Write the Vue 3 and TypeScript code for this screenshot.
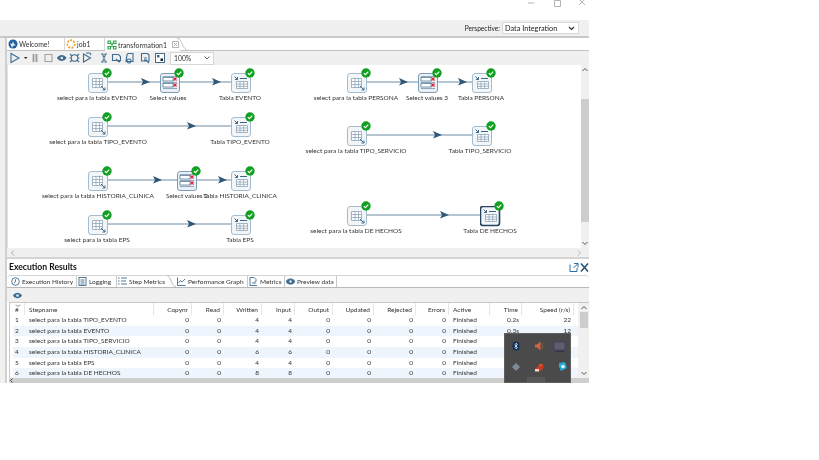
<script setup lang="ts">
interface StepNode { kind: 'in' | 'sel' | 'out' | 'outSel'; x: number; y: number; label: string; cx: number }
interface Hop { x1: number; x2: number; y: number; head: number }

const nodes: StepNode[] = [
  { kind: 'in', x: 88, y: 73, label: 'select para la tabla EVENTO', cx: 97 },
  { kind: 'sel', x: 160, y: 73, label: 'Select values', cx: 168 },
  { kind: 'out', x: 231, y: 73, label: 'Tabla EVENTO', cx: 240 },
  { kind: 'in', x: 88, y: 117, label: 'select para la tabla TIPO_EVENTO', cx: 98 },
  { kind: 'out', x: 231, y: 117, label: 'Tabla TIPO_EVENTO', cx: 240 },
  { kind: 'in', x: 88, y: 171, label: 'select para la tabla HISTORIA_CLINICA', cx: 98 },
  { kind: 'sel', x: 177, y: 171, label: 'Select values 2', cx: 187 },
  { kind: 'out', x: 231, y: 171, label: 'Tabla HISTORIA_CLINICA', cx: 240 },
  { kind: 'in', x: 88, y: 215, label: 'select para la tabla EPS', cx: 97 },
  { kind: 'out', x: 231, y: 215, label: 'Tabla EPS', cx: 240 },
  { kind: 'in', x: 347, y: 73, label: 'select para la tabla PERSONA', cx: 356 },
  { kind: 'sel', x: 418, y: 73, label: 'Select values 3', cx: 427 },
  { kind: 'out', x: 472, y: 73, label: 'Tabla PERSONA', cx: 481 },
  { kind: 'in', x: 347, y: 126, label: 'select para la tabla TIPO_SERVICIO', cx: 356 },
  { kind: 'out', x: 472, y: 126, label: 'Tabla TIPO_SERVICIO', cx: 480 },
  { kind: 'in', x: 347, y: 206, label: 'select para la tabla DE HECHOS', cx: 356 },
  { kind: 'outSel', x: 480, y: 206, label: 'Tabla DE HECHOS', cx: 490 },
]

const hops: Hop[] = [
  { x1: 108, x2: 160, y: 82, head: 141 },
  { x1: 180, x2: 231, y: 82, head: 212 },
  { x1: 108, x2: 231, y: 126, head: 187 },
  { x1: 108, x2: 177, y: 180, head: 153 },
  { x1: 197, x2: 231, y: 180, head: 218 },
  { x1: 108, x2: 231, y: 224, head: 187 },
  { x1: 367, x2: 418, y: 82, head: 399 },
  { x1: 438, x2: 472, y: 82, head: 458 },
  { x1: 367, x2: 472, y: 135, head: 433 },
  { x1: 367, x2: 480, y: 215, head: 440 },
]

const columns = ['#', 'Stepname', 'Copynr', 'Read', 'Written', 'Input', 'Output', 'Updated', 'Rejected', 'Errors', 'Active', 'Time', 'Speed (r/s)']
const rows: string[][] = [
  ['1', 'select para la tabla TIPO_EVENTO', '0', '0', '4', '4', '0', '0', '0', '0', 'Finished', '0.2s', '22'],
  ['2', 'select para la tabla EVENTO', '0', '0', '4', '4', '0', '0', '0', '0', 'Finished', '0.3s', '12'],
  ['3', 'select para la tabla TIPO_SERVICIO', '0', '0', '4', '4', '0', '0', '0', '0', 'Finished', '', ''],
  ['4', 'select para la tabla HISTORIA_CLINICA', '0', '0', '6', '6', '0', '0', '0', '0', 'Finished', '', ''],
  ['5', 'select para la tabla EPS', '0', '0', '4', '4', '0', '0', '0', '0', 'Finished', '', ''],
  ['6', 'select para la tabla DE HECHOS', '0', '0', '8', '8', '0', '0', '0', '0', 'Finished', '', ''],
]
const bottomTabs = [
  { id: 'history', label: 'Execution History', on: false, w: 67 },
  { id: 'log', label: 'Logging', on: false, w: 40 },
  { id: 'metrics', label: 'Step Metrics', on: true, w: 59 },
  { id: 'perf', label: 'Performance Graph', on: false, w: 72 },
  { id: 'met', label: 'Metrics', on: false, w: 37 },
  { id: 'prev', label: 'Preview data', on: false, w: 52 },
]
</script>

<template>
  <div class="window">
    <div class="titlebar">
      <span class="winctl">
        <svg width="58" height="8" viewBox="0 0 58 8"><path d="M0 4h6M26.500 1.500h6v6h-6zM51 0l6 6M57 0l-6 6" fill="none" stroke="#b4b4b4" stroke-width="1" /></svg>
      </span>
    </div>
    <div class="perspective">
      <span class="plabel">Perspective:</span>
      <div class="pcombo"><span>Data Integration</span><svg width="7" height="5" viewBox="0 0 7 5"><path d="M1 1l2.500 2.500L6 1" fill="none" stroke="#333" stroke-width="1.200" /></svg></div>
    </div>

    <div class="main">
      <div class="rail"></div>
      <div class="workspace">
        <div class="editor">
          <div class="tabs">
            <div class="tab">
              <svg width="10" height="10" viewBox="0 0 10 10"><circle cx="5" cy="5" r="4.500" fill="#1f5f9e" /><path d="M2 4l2 1 1-3 1 3 2 1-3 1-1 2z" fill="#dfe9f3" /></svg>
              <span>Welcome!</span>
            </div>
            <div class="tab job">
              <svg width="10" height="10" viewBox="0 0 10 10"><circle cx="5" cy="5" r="3.800" fill="none" stroke="#f0a030" stroke-width="1.800" stroke-dasharray="2 1.300" /></svg>
              <span>job1</span>
            </div>
            <div class="tab active">
              <svg width="10" height="10" viewBox="0 0 10 10"><path d="M1 1h2.500v2.500H1zM6.500 1H9v2.500H6.500zM1 6.500h2.500V9H1zM6.500 6.500H9V9H6.500zM3.500 2.500L6.500 7.500M6.500 2.500L3.500 7.500" fill="none" stroke="#2aa84a" stroke-width="1.100" /></svg>
              <span>transformation1</span>
              <svg class="tabx" width="7" height="7" viewBox="0 0 7 7"><path d="M.5.500h6v6h-6zM2 2l3 3M5 2L2 5" fill="none" stroke="#a0a0a0" stroke-width=".8" /></svg>
              <svg class="tabcurve" width="12" height="13" viewBox="0 0 12 13"><path d="M0 .5h1c4 0 4 12 11 12" fill="#fff" stroke="#c2c2c2" /></svg>
            </div>
          </div>

          <div class="toolbar">
            <svg width="156" height="12" viewBox="0 0 156 12" class="tools">
              <g fill="none" stroke="#3f6d91" stroke-width="1.100">
                <path d="M1 1.500v9l8-4.500z" />
                <path d="M14 5h3.500l-1.750 2z" fill="#222" stroke="none" />
                <path d="M23.500 2v8M26.500 2v8" stroke="#9b9b9b" stroke-width="1.800" />
                <rect x="35" y="2.500" width="7" height="7" stroke="#a5a5a5" />
                <path d="M47.500 6c2-3.200 6.500-3.200 8.500 0-2 3.200-6.500 3.200-8.500 0z" fill="#3f6d91" />
                <circle cx="51.800" cy="6" r="1.300" fill="#dfeaf2" stroke="none" />
                <circle cx="64.500" cy="6" r="3.300" />
                <path d="M60 2l2 2M69 2l-2 2M60 10l2-2M69 10l-2-2M59.500 6h1.500M69.500 6H68" />
                <path d="M73.500 2v8l7-4z M76 1h4l1 2" />
                <path d="M91 2h2v2M97 2h-2v2M91 10h2V8M97 10h-2V8M93 4l2 4M95 4l-2 4" />
                <path d="M102.500 2.500h6l2 2v4h-8zM106 7l3 3 2-2" />
                <path d="M117 3l1-1.500h5v8h-7zM119 7a2 2 0 1 0 .1 0" />
                <path d="M131.500 1.500h6l1.500 1.500v6h-7.500zM134 6h3M134 8h3M137 9l2 2" />
              </g>
              <rect x="145.500" y="1.500" width="9" height="9" fill="#fff" stroke="#3f6d91" />
              <rect x="147" y="3" width="2.500" height="2.500" fill="#3f6d91" />
              <rect x="150.500" y="6.500" width="2.500" height="2.500" fill="#222" />
            </svg>
            <div class="zoombox"><span>100%</span><svg width="6" height="4" viewBox="0 0 6 4"><path d="M.5.500L3 3 5.500.500" fill="none" stroke="#666" /></svg></div>
          </div>

          <div class="canvasrow">
            <div class="canvas">
              <svg class="hops" width="581" height="192">
                <g v-for="(h, i) in hops" :key="i">
                  <line :x1="h.x1 - 8" :x2="h.x2 - 8" :y1="h.y - 65" :y2="h.y - 65" stroke="#6d8ba3" stroke-width="1" />
                  <path :d="`M${h.head - 8} ${h.y - 69}l9 4-9 3.500 2-3.500z`" fill="#2f5878" />
                </g>
              </svg>
              <div v-for="n in nodes" :key="n.label" class="node" :style="{ left: n.x - 8 + 'px', top: n.y - 65 + 'px' }">
                <svg width="22" height="22" viewBox="0 0 22 22" class="stepicon">
                  <rect x=".5" y=".5" width="19" height="19" rx="2.500" :fill="n.kind === 'sel' ? '#e9eff4' : '#f3f6f9'" :stroke="n.kind === 'outSel' ? '#26445e' : n.kind === 'sel' ? '#7e9cb4' : '#a4bccf'" :stroke-width="n.kind === 'outSel' ? 1.600 : 1" />
                  <template v-if="n.kind === 'in'">
                    <path d="M4.500 5.500h10v9h-10zM4.500 8.500h10M4.500 11.500h10M8 5.500v9M11.500 5.500v9" fill="#fff" stroke="#8ea5b8" stroke-width=".8" />
                    <path d="M13 13l4 4M17 14.500V17h-2.500" fill="none" stroke="#3f6886" stroke-width="1" />
                  </template>
                  <template v-else-if="n.kind === 'sel'">
                    <path d="M3 3.500h14M3 9.500h14M3 15.500h14" stroke="#8fa8bc" stroke-width="1" />
                    <rect x="3" y="4.500" width="10" height="3.500" fill="#fff" stroke="#5a7f9a" stroke-width=".8" />
                    <rect x="3" y="10.500" width="10" height="3.500" fill="#fff" stroke="#5a7f9a" stroke-width=".8" />
                    <path d="M13.500 4.500l3 3M16.500 4.500l-3 3M13.500 10.500l3 3M16.500 10.500l-3 3" stroke="#d8243a" stroke-width="1.100" />
                  </template>
                  <template v-else>
                    <path d="M5.500 8.500h11v7h-11zM5.500 11h11M5.500 13.300h11M9 8.500v7M12.700 8.500v7" fill="#fff" stroke="#8ea5b8" stroke-width=".8" />
                    <path d="M3.500 3.500l3 3M6.500 4v2.500H4M9 5.500h7" fill="none" stroke="#3f6886" stroke-width="1" />
                  </template>
                </svg>
                <svg width="10" height="10" viewBox="0 0 10 10" class="check"><circle cx="5" cy="5" r="4.700" fill="#10a020" /><path d="M2.800 5.100l1.600 1.600 2.900-3" fill="none" stroke="#fff" stroke-width="1.200" /></svg>
              </div>
              <div v-for="n in nodes" :key="'l' + n.label" class="label" :style="{ left: n.cx - 8 + 'px', top: n.y + 20 - 65 + 'px' }">{{ n.label }}</div>
            </div>
            <div class="vscroll">
              <svg width="8" height="6" viewBox="0 0 8 6"><path d="M1.500 4L4 1.500 6.500 4" fill="none" stroke="#555" /></svg>
              <div class="vtrack"><div class="vthumb"></div></div>
              <svg width="8" height="6" viewBox="0 0 8 6"><path d="M1.500 2L4 4.500 6.500 2" fill="none" stroke="#555" /></svg>
            </div>
          </div>
          <div class="hscroll">
            <svg width="6" height="8" viewBox="0 0 6 8"><path d="M4 1.500L1.500 4 4 6.500" fill="none" stroke="#aaa" /></svg>
            <svg width="6" height="8" viewBox="0 0 6 8"><path d="M2 1.500L4.500 4 2 6.500" fill="none" stroke="#bbb" /></svg>
          </div>
        </div>

        <div class="results">
          <div class="rhead">
            <span class="rtitle">Execution Results</span>
            <svg width="20" height="9" viewBox="0 0 20 9" class="ricons">
              <path d="M1 1.500v7h7V5M5 .5h4v4M9 .5L4.500 5" fill="none" stroke="#2f6f9f" stroke-width="1" />
              <path d="M12 .5l7 8M19 .5l-7 8" stroke="#24507a" stroke-width="1.500" />
            </svg>
          </div>
          <div class="rtabs">
            <div v-for="t in bottomTabs" :key="t.id" class="rtab" :class="{ on: t.on }" :style="{ width: t.w + 'px' }">
              <svg width="9" height="9" viewBox="0 0 9 9">
                <g fill="none" stroke="#3d6a8c" stroke-width=".9">
                  <template v-if="t.id === 'history'"><circle cx="4.500" cy="4.500" r="3.800" /><path d="M4.500 2.300v2.400L3 6" /></template>
                  <template v-else-if="t.id === 'log'"><rect x="1" y=".5" width="7" height="8" /><path d="M2.500 3h4M2.500 5h4M2.500 7h4" /></template>
                  <template v-else-if="t.id === 'metrics'"><path d="M3 1h6M3 4h5M3 7h6M0 1h1.500M0 4h1.500M0 7h1.500" /></template>
                  <template v-else-if="t.id === 'perf'"><path d="M.5.500v8h8M1.500 6l2-2.500 1.500 1.500 3-3" /></template>
                  <template v-else-if="t.id === 'met'"><path d="M1 .5h4l2 2v2M1 .5v8h7M4 7V5M6 7V4" /></template>
                  <template v-else><path d="M0 4.500c2-3.500 7-3.500 9 0-2 3.500-7 3.500-9 0z" fill="#3d6a8c" /><circle cx="4.500" cy="4.500" r="1.200" fill="#dfeaf2" stroke="none" /></template>
                </g>
              </svg>
              <span>{{ t.label }}</span>
              <svg v-if="t.on" class="rcurve" width="9" height="12" viewBox="0 0 9 12"><path d="M0 .5c4 0 4 11 9 11" fill="none" stroke="#bdbdbd" /></svg>
            </div>
          </div>
          <div class="rtools">
            <svg width="9" height="7" viewBox="0 0 9 7"><path d="M0 3.500c2-3.700 7-3.700 9 0-2 3.700-7 3.700-9 0z" fill="#3f6d91" /><circle cx="4.500" cy="3.500" r="1.300" fill="#dfeaf2" /></svg>
          </div>
          <div class="tablewrap">
            <div class="tablemain">
              <div class="trow thead">
                <span v-for="(c, i) in columns" :key="c" class="cell" :class="'c' + i">{{ c }}</span>
              </div>
              <div v-for="r in rows" :key="r[0]" class="trow">
                <span v-for="(v, i) in r" :key="i" class="cell" :class="'c' + i">{{ v }}</span>
              </div>
            </div>
            <div class="tscroll">
              <svg width="8" height="6" viewBox="0 0 8 6"><path d="M1.500 4L4 1.500 6.500 4" fill="none" stroke="#555" /></svg>
              <div class="tthumb"></div>
              <svg width="8" height="6" viewBox="0 0 8 6" class="tdown"><path d="M1.500 2L4 4.500 6.500 2" fill="none" stroke="#555" /></svg>
            </div>
          </div>
          <div class="thscroll">
            <svg width="5" height="5" viewBox="0 0 5 5"><path d="M3.500 .5L1.500 2.500 3.500 4.500" fill="none" stroke="#444" /></svg>
          </div>
        </div>
      </div>
    </div>

    <div class="tray">
      <svg width="60" height="44" viewBox="0 0 60 44">
        <ellipse cx="8" cy="10" rx="3.500" ry="4.500" fill="#10315f" />
        <path d="M6.500 8.500l3 3-1.500 1.500v-6l1.500 1.500-3 3" fill="none" stroke="#fff" stroke-width=".7" />
        <path d="M27 8.500h2l3.500-3v9l-3.500-3h-2z" fill="#d8653a" />
        <path d="M33.500 7c1.500 2 1.500 4 0 6" fill="none" stroke="#6a5a50" stroke-width="1.500" />
        <rect x="46" y="6" width="11" height="8" fill="#5e5e6a" stroke="#3e3e78" stroke-width="1" />
        <path d="M48 15.500h8" stroke="#333" stroke-width="1" />
        <path d="M8 27l4 4-4 4-4-4z" fill="#7c8a9c" />
        <path d="M27 35c0-4 2-3 3-5 1-2 3-2.500 5-2 1 2 0 5-1 6-2 2-5 1.500-7 1z" fill="#c83a2a" />
        <path d="M27 33h4v2.500h-4z" fill="#e8dcc8" />
        <path d="M31 29.500c1-1 2.500-1 3 0" fill="none" stroke="#e08a30" stroke-width="1" />
        <path d="M51 27l6-1 2 6-6 3-2-4z" fill="#26a8d8" />
        <circle cx="55" cy="30.500" r="1.800" fill="#e6f6fc" />
      </svg>
      <div class="traygrip"></div>
    </div>
  </div>
</template>

<style scoped>
.window {
  position: relative;
  width: 589px;
  height: 383px;
  overflow: hidden;
  display: flex;
  flex-direction: column;
  background: #fff;
  font-family: Lato, "Open Sans", sans-serif;
  font-size: 6.5px;
  color: #333;
  filter: blur(0.3px);
}
svg { flex: none; }
.titlebar {
  height: 20px;
  flex: none;
  position: relative;
  background: #fff;
}
.winctl {
  position: absolute;
  left: 528px;
  top: -1px;
}
.perspective {
  height: 16px;
  flex: none;
  background: #f0f0f0;
  display: flex;
  align-items: center;
  justify-content: flex-end;
  padding-right: 10px;
  gap: 2px;
  border-bottom: 2px solid #c9c9c9;
}
.plabel { font-size: 6.6px; color: #222; }
.pcombo {
  width: 77px;
  height: 12px;
  box-sizing: border-box;
  background: #fff;
  border: 1px solid #d8d8d8;
  display: flex;
  align-items: center;
  justify-content: space-between;
  padding: 0 3px 0 2px;
  font-size: 7.3px;
  color: #222;
}
.main {
  flex: 1;
  min-height: 0;
  display: flex;
  background: #fff;
}
.rail {
  width: 5px;
  flex: none;
  background: #f0f0f0;
  border-right: 2px solid #d0d0d0;
}
.workspace {
  flex: 1;
  min-width: 0;
  display: flex;
  flex-direction: column;
}
.editor {
  height: 219px;
  flex: none;
  display: flex;
  flex-direction: column;
  border-bottom: 2px solid #d4d4d4;
}
.tabs {
  height: 13px;
  flex: none;
  box-sizing: border-box;
  display: flex;
  align-items: stretch;
  border-bottom: 1px solid #c2c2c2;
  background: #fff;
}
.tab {
  display: flex;
  align-items: center;
  gap: 1px;
  width: 58px;
  padding-left: 1px;
  box-sizing: border-box;
  font-size: 6.9px;
  color: #333;
  background: #fff;
  border-right: 1px solid #d6d6d6;
}
.tab.job { width: 40px; }
.tab.active {
  position: relative;
  width: 75px;
  padding-left: 2px;
  height: 13px;
  border-right: none;
}
.tabx { margin-left: 4px; }
.tabcurve { position: absolute; left: 72px; top: 0; }
.toolbar {
  height: 14px;
  flex: none;
  display: flex;
  align-items: center;
  background: #f0f0f0;
  padding-left: 3px;
  gap: 4px;
}
.zoombox {
  width: 44px;
  height: 13px;
  box-sizing: border-box;
  background: #fff;
  border: 1px solid #d6d6d6;
  display: flex;
  align-items: center;
  justify-content: space-between;
  padding: 0 3px;
  font-size: 6.8px;
}
.canvasrow {
  flex: 1;
  min-height: 0;
  display: flex;
}
.canvas {
  position: relative;
  flex: 1;
  min-width: 0;
  background: #fff;
  border-left: 1px solid #e2e2e2;
  overflow: hidden;
}
.hops { position: absolute; left: 0; top: 0; }
.node { position: absolute; width: 22px; height: 22px; }
.stepicon { position: absolute; left: 0; top: 0; }
.check { position: absolute; left: 14px; top: -5px; }
.label {
  position: absolute;
  transform: translateX(-50%);
  white-space: nowrap;
  font-size: 6.5px;
  line-height: 10px;
  color: #333;
}
.vscroll {
  width: 8px;
  flex: none;
  background: #f0f0f0;
  display: flex;
  flex-direction: column;
  align-items: center;
  padding-top: 2px;
  padding-bottom: 2px;
}
.vtrack { flex: 1; width: 8px; padding-top: 26px; }
.vthumb { width: 8px; height: 123px; background: #cdcdcd; }
.hscroll {
  height: 9px;
  flex: none;
  background: #f0f0f0;
  display: flex;
  align-items: center;
  justify-content: space-between;
  padding: 0 7px 0 3px;
}
.results {
  flex: 1;
  min-height: 0;
  display: flex;
  flex-direction: column;
  background: #fff;
}
.rhead {
  height: 16px;
  flex: none;
  display: flex;
  align-items: center;
  justify-content: space-between;
  padding-left: 2px;
}
.rtitle { font-weight: 700; font-size: 8.6px; color: #111; }
.rtabs {
  height: 13px;
  flex: none;
  box-sizing: border-box;
  display: flex;
  border-top: 1px solid #d4d4d4;
  border-bottom: 1px solid #b8b8b8;
  border-radius: 4px 4px 0 0;
  padding-left: 3px;
}
.rtab {
  position: relative;
  display: flex;
  align-items: center;
  gap: 2px;
  padding-left: 1px;
  box-sizing: border-box;
  font-size: 6.5px;
  color: #333;
  border-right: 1px solid #c8c8c8;
  white-space: nowrap;
}
.rtab.on { border-right: none; }
.rcurve { position: absolute; right: 0; top: -1px; }
.rtools {
  height: 14px;
  flex: none;
  display: flex;
  align-items: center;
  padding-left: 6px;
  background: #f0f0f0;
}
.tablewrap {
  flex: 1;
  min-height: 0;
  display: flex;
  border-top: 1px solid #c8c8c8;
  border-left: 1px solid #c8c8c8;
  margin-left: 2px;
}
.tablemain {
  flex: 1;
  min-width: 0;
  overflow: hidden;
  padding-left: 3px;
}
.trow {
  display: grid;
  grid-template-columns: 12px 129px 38px 32px 38px 33px 38px 41px 42px 33px 41px 32px 52px;
  height: 10.67px;
  line-height: 10.67px;
  font-size: 6.5px;
}
.trow:nth-child(odd):not(.thead) { background: #eef5fc; }
.trow.thead {
  height: 12px;
  line-height: 13px;
}
.thead .cell { border-right: 1px solid #e6e6e6; }
.thead .c0 { position: relative; }
.thead .c0::before {
  content: "";
  position: absolute;
  left: 3px;
  top: 0;
  width: 3px;
  height: 3px;
  border-right: 1px solid #999;
  border-bottom: 1px solid #999;
  transform: scale(1, .6) rotate(45deg);
}
.cell {
  padding: 0 3px;
  text-align: right;
  white-space: nowrap;
  overflow: hidden;
  box-sizing: border-box;
}
.c0 { text-align: left; padding: 0 0 0 2px; }
.c1 { text-align: left; padding-left: 4px; }
.c10 { text-align: left; padding-left: 4px; }
.tscroll {
  width: 11px;
  flex: none;
  background: #f0f0f0;
  display: flex;
  flex-direction: column;
  align-items: center;
  padding-top: 2px;
}
.tthumb { width: 8px; height: 16px; margin-top: 1px; background: #cdcdcd; }
.tdown { margin-top: auto; margin-bottom: 2px; }
.thscroll {
  height: 5px;
  flex: none;
  margin-left: 2px;
  background: #cfcfcf;
  display: flex;
  align-items: center;
}
.tray {
  position: absolute;
  left: 504px;
  top: 333px;
  width: 67px;
  height: 50px;
  box-sizing: border-box;
  background: #4a4a4a;
  border: 1px solid #5e5e5e;
  padding: 2px 0 0 3px;
}
.traygrip {
  position: absolute;
  left: 22px;
  bottom: 0;
  width: 18px;
  height: 5px;
  background: #575757;
}
</style>
<style>
html, body { background: #fff; }
</style>
